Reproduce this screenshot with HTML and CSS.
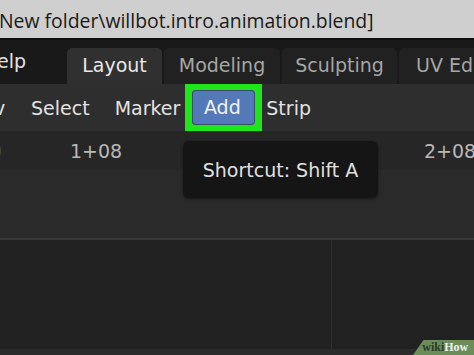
FILE: index.html
```html
<!DOCTYPE html>
<html>
<head>
<meta charset="utf-8">
<link rel="stylesheet" href="styles.css">
</head>
<body>
<div class="app">
  <div class="titlebar"><span class="title">New folder\willbot.intro.animation.blend]</span></div>
  <div class="topbar">
    <span class="menu-help">elp</span>
    <div class="tabs">
      <div class="tab active">Layout</div>
      <div class="tab">Modeling</div>
      <div class="tab">Sculpting</div>
      <div class="tab">UV Editing</div>
    </div>
  </div>
  <div class="header">
    <span class="hitem v">v</span>
    <span class="hitem">Select</span>
    <span class="hitem marker">Marker</span>
    <span class="highlight"><span class="addbtn">Add</span></span>
    <span class="hitem strip">Strip</span>
  </div>
  <div class="ruler">
    <span class="tick t0">0</span>
    <span class="tick t1">1+08</span>
    <span class="tick t2">2+08</span>
    <div class="tooltip">Shortcut: Shift A</div>
  </div>
  <div class="upper"></div>
  <div class="lower">
    <div class="pane left"></div>
    <div class="pane right"></div>
  </div>
  <div class="footer"></div>
  <div class="wikihow"><span class="wlabel"><span class="wiki">wiki</span><span class="how">How</span></span></div>
</div>
</body>
</html>
```
FILE: styles.css
```css
html, body {
  margin: 0;
  padding: 0;
  background: #212121;
}
.app {
  position: relative;
  width: 474px;
  height: 355px;
  overflow: hidden;
  font-family: "DejaVu Sans", sans-serif;
  display: flex;
  flex-direction: column;
}
.app > * { flex-shrink: 0; }
.titlebar {
  height: 38px;
  background: #cfcfcf;
  border-bottom: 2px solid #0e0e0e;
  display: flex;
  align-items: center;
  overflow: hidden;
  white-space: nowrap;
}
.title {
  font-family: "Open Sans", sans-serif;
  font-size: 19.4px;
  color: #1a1a1a;
  margin-left: -1px;
  padding-top: 2px;
}
.topbar {
  height: 44px;
  background: #191919;
  display: flex;
  align-items: flex-end;
  white-space: nowrap;
  overflow: hidden;
}
.topbar > *, .tabs > *, .header > *, .ruler > * { flex-shrink: 0; }
.menu-help {
  font-size: 19px;
  color: #e4e4e4;
  width: 70px;
  align-self: center;
  margin-left: -3px;
  margin-top: -2px;
}
.tabs {
  display: flex;
  height: 36px;
  gap: 2px;
}
.tab {
  height: 36px;
  box-sizing: border-box;
  padding-top: 6px;
  border-radius: 5px 5px 0 0;
  background: #212121;
  color: #a6a6a6;
  font-size: 19px;
  text-align: center;
}
.tab.active {
  background: #303030;
  color: #e8e8e8;
  width: 95px;
}
.tab:nth-child(2) { width: 116px; }
.tab:nth-child(3) { width: 115px; }
.tab:nth-child(4) { width: 120px; text-align: left; padding-left: 17px; }
.header {
  height: 47px;
  background: #2e2e2e;
  display: flex;
  align-items: center;
  white-space: nowrap;
  color: #e2e2e2;
  font-size: 19px;
  overflow: hidden;
}
.hitem { margin-right: 25px; }
.hitem.v { margin-left: -6px; width: 37px; margin-right: 0; }
.hitem.marker { margin-right: 5px; }
.highlight {
  box-sizing: border-box;
  width: 77px;
  height: 47px;
  background: #1ee61a;
  padding: 6px 7px;
  display: flex;
  margin-right: 4px;
}
.addbtn {
  flex: 1;
  background: #5479b8;
  border-radius: 4px;
  color: #f2f2f2;
  display: flex;
  align-items: center;
  justify-content: center;
  padding-bottom: 2px;
  padding-right: 3px;
  box-shadow: 0 0 0 1px #3a4d6e inset;
}
.hitem.strip { margin-right: 0; }
.ruler {
  position: relative;
  height: 39px;
  background: #262626;
  color: #b8b8b8;
  font-size: 19px;
  display: flex;
  align-items: center;
  white-space: nowrap;
}
.tick.t0 { margin-left: -10px; width: 80px; color: #4a4a4a; }
.tick.t1 { width: 354px; }
.tooltip {
  position: absolute;
  left: 183px;
  top: 10px;
  width: 195px;
  height: 57px;
  box-sizing: border-box;
  background: #151515;
  border-radius: 6px;
  color: #e0e0e0;
  font-size: 19px;
  display: flex;
  align-items: center;
  justify-content: center;
  box-shadow: 0 1px 3px rgba(0,0,0,0.5);
  z-index: 2;
}
.upper {
  height: 68px;
  background: #2a2a2a;
  border-bottom: 2px solid #383838;
}
.lower {
  flex: 1 1 auto;
  display: flex;
  background: #212121;
  gap: 2px;
}
.pane.left { width: 331px; background: #212121; border-right: 1px solid #2e2e2e; }
.pane.right { flex: 1; background: #212121; }
.footer {
  height: 6px;
  background: #2b2b2b;
}
.wikihow {
  position: absolute;
  left: 413px;
  bottom: 0;
  height: 15px;
  width: 72px;
  background: #6a8d5a;
  transform: skewX(-35deg);
  transform-origin: bottom left;
  display: flex;
  align-items: center;
  font-family: "Liberation Serif", serif;
  font-weight: bold;
  font-size: 12px;
  white-space: nowrap;
}
.wlabel { transform: skewX(35deg); display: inline-block; margin-left: 4px; }
.wiki { color: #2e3a28; }
.how { color: #f0f0f0; }
```
